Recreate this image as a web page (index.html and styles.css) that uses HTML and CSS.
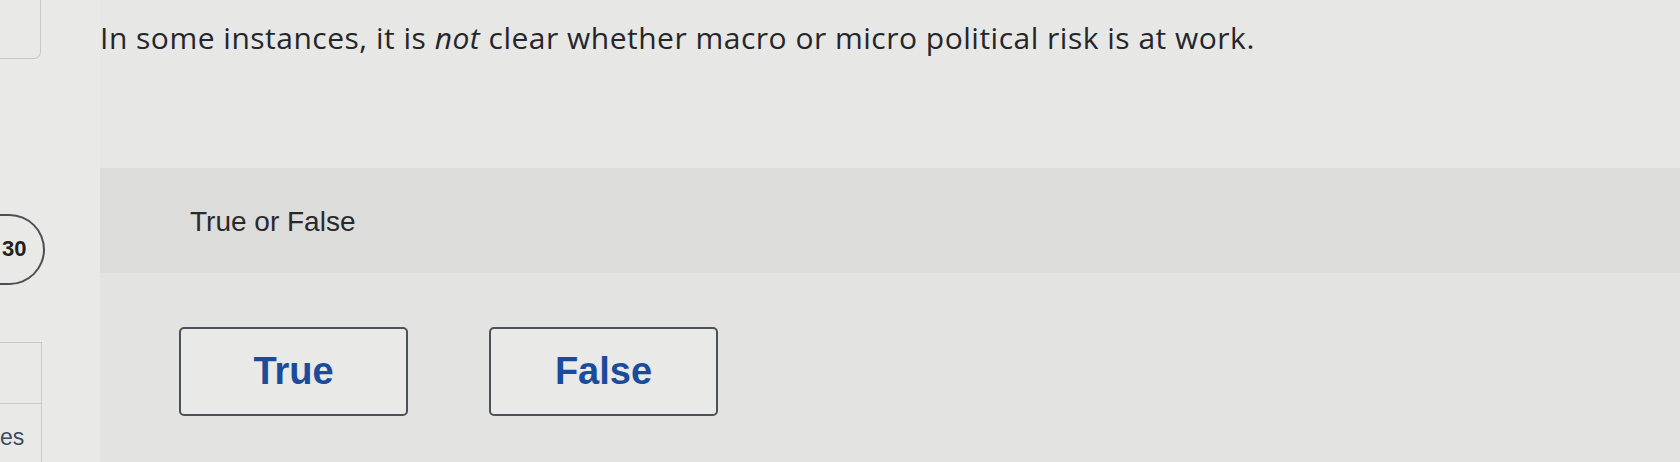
FILE: index.html
```html
<!DOCTYPE html>
<html lang="en">
<head>
    <meta charset="UTF-8">
    <meta name="viewport" content="width=device-width, initial-scale=1.0">
    <title>True or False</title>
    <link rel="stylesheet" href="styles.css">
</head>
<body>
    <div class="page">
        <aside class="sidebar">
            <div class="side-box top-box"></div>
            <div class="question-num">30</div>
            <div class="side-box list-box"></div>
            <div class="side-box list-box last">
                <span class="side-label">es</span>
            </div>
        </aside>

        <main class="question">
            <h1 class="prompt">In some instances, it is <em>not</em> clear whether macro or micro political risk is at work.</h1>

            <div class="question-type">True or False</div>

            <div class="answers">
                <button type="button" class="answer-btn">True</button>
                <button type="button" class="answer-btn">False</button>
            </div>
        </main>
    </div>
</body>
</html>
```

FILE: styles.css
```css
* {
    margin: 0;
    padding: 0;
    box-sizing: border-box;
}

body {
    font-family: "Liberation Sans", Arial, sans-serif;
    background: #e7e7e5;
    color: #262629;
    overflow: hidden;
}

.page {
    display: grid;
    grid-template-columns: 100px 1fr;
    height: 462px;
}

/* left column */
.sidebar {
    display: flex;
    flex-direction: column;
    overflow: hidden;
    background: #e9e9e7;
}

.side-box {
    width: 42px;
    border: 1px solid #c9c9c7;
    border-left: none;
}

.top-box {
    width: 41px;
    height: 61px;
    border-top: none;
    border-radius: 0 0 7px 0;
}

.question-num {
    display: flex;
    align-items: center;
    width: 45px;
    height: 73px;
    margin-top: 155px;
    padding-left: 2px;
    border: 2px solid #4d4f55;
    border-left: none;
    border-radius: 0 36px 36px 0;
    font-size: 22px;
    font-weight: bold;
    color: #222;
}

.list-box {
    height: 65px;
    margin-top: 57px;
}

.list-box.last {
    height: 60px;
    margin-top: -1px;
    border-bottom: none;
    padding-top: 20px;
}

.side-label {
    display: block;
    font-size: 23px;
    color: #3e4a63;
}

/* question */
.question {
    display: flex;
    flex-direction: column;
}

.prompt {
    margin-top: 19px;
    font-family: "Open Sans", "Liberation Sans", sans-serif;
    font-size: 30px;
    line-height: 38px;
    letter-spacing: 0.5px;
    font-weight: normal;
    color: #26262a;
}

.question-type {
    margin-top: 111px;
    height: 105px;
    padding: 37px 0 0 90px;
    background: #dcdcda;
    font-size: 28px;
    line-height: 34px;
    color: #29292c;
}

.answers {
    flex: 1;
    display: flex;
    gap: 81px;
    padding: 54px 0 0 79px;
    background: #e3e3e1;
}

.answer-btn {
    width: 229px;
    height: 89px;
    border: 2px solid #4c505a;
    border-radius: 5px;
    background: #e9e9e7;
    font-family: inherit;
    font-size: 38px;
    font-weight: bold;
    color: #1b4c9c;
    cursor: pointer;
}

.answer-btn:hover {
    background: #efefed;
}
```
